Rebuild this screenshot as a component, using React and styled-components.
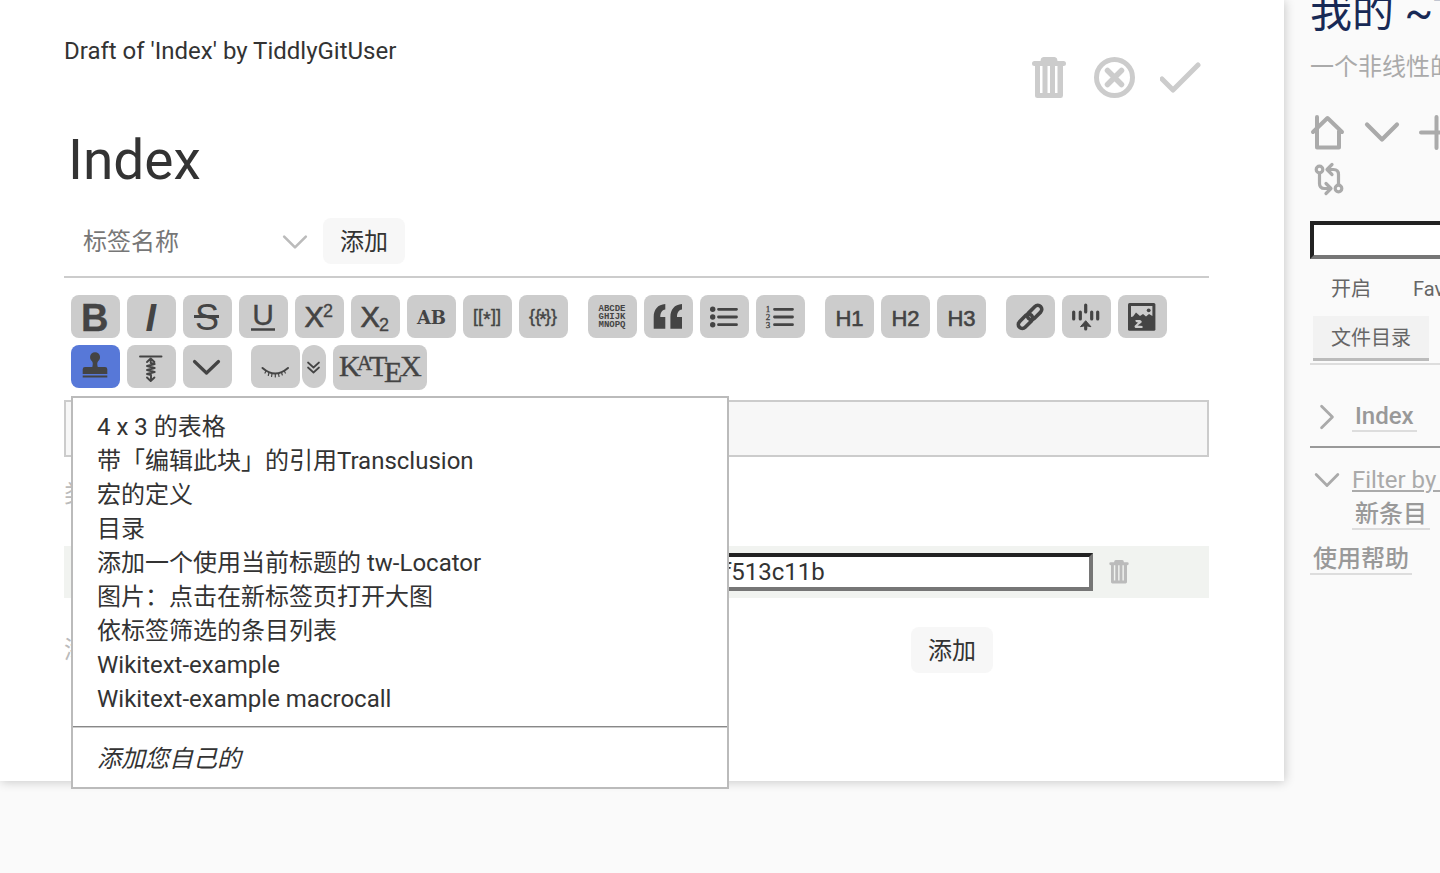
import styled, { createGlobalStyle, css } from "styled-components";

const sans = `Roboto, "Noto Sans CJK SC", sans-serif`;

const snippets = [
  "4 x 3 的表格",
  "带「编辑此块」的引用Transclusion",
  "宏的定义",
  "目录",
  "添加一个使用当前标题的 tw-Locator",
  "图片：点击在新标签页打开大图",
  "依标签筛选的条目列表",
  "Wikitext-example",
  "Wikitext-example macrocall",
];

const TrashIcon = ({ size = 42 }) => (
  <svg width={size} height={size} viewBox="0 0 42 42" aria-hidden="true">
    <g fill="currentColor">
      <path d="M13 1.500q1-1.500 2.500-1.500h11q1.500 0 2.500 1.500l.5 2.500h6a2.300 2.300 0 0 1 0 5H35v29.500a2.500 2.500 0 0 1-2.500 2.500h-23A2.500 2.500 0 0 1 7 38.500V9H6.500a2.300 2.300 0 0 1 0-5h6zM12 9v27h2.500V9zm7.500 0v27H22V9zm7.500 0v27h2.500V9z" fillRule="evenodd" />
    </g>
  </svg>
);

const CancelIcon = () => (
  <svg width="42" height="42" viewBox="0 0 42 42" fill="none" stroke="currentColor" aria-hidden="true">
    <circle cx="20.500" cy="20.500" r="18" strokeWidth="5" />
    <path d="M13.500 13.500l14 14M27.500 13.500l-14 14" strokeWidth="5.500" strokeLinecap="round" />
  </svg>
);

const DoneIcon = () => (
  <svg width="42" height="42" viewBox="0 0 42 42" fill="none" stroke="currentColor" aria-hidden="true">
    <path d="M2 22l11 11L38 8" strokeWidth="5" strokeLinecap="round" strokeLinejoin="round" />
  </svg>
);

const ChevronIcon = ({ size = 24, width = 3, right }) => (
  <svg width={size} height={size} viewBox="0 0 24 24" fill="none" stroke="currentColor" strokeWidth={width} strokeLinecap="round" strokeLinejoin="round" aria-hidden="true">
    <path d={right ? "M7 2l10 10L7 22" : "M2 7l10 10L22 7"} />
  </svg>
);

const HomeIcon = () => (
  <svg width="36" height="36" viewBox="0 0 36 36" fill="none" stroke="currentColor" strokeWidth="4" strokeLinecap="round" strokeLinejoin="round" aria-hidden="true">
    <path d="M7 17v16.500h22V17M3 18L17.500 4 32 18M7 18V3" />
  </svg>
);

const PlusIcon = () => (
  <svg width="36" height="36" viewBox="0 0 36 36" fill="none" stroke="currentColor" strokeWidth="4" strokeLinecap="round" aria-hidden="true">
    <path d="M18.500 3v31M3 18.500h31" />
  </svg>
);

const CompareIcon = () => (
  <svg width="36" height="36" viewBox="0 0 36 36" fill="none" stroke="currentColor" strokeWidth="3.200" strokeLinecap="round" strokeLinejoin="round" aria-hidden="true">
    <circle cx="9.500" cy="8.500" r="3.300" />
    <circle cx="28.500" cy="27.500" r="3.300" />
    <path d="M9.500 12.500v10q0 5 5 5h6M16 22.500l5 5-5 5M28.500 23.500v-10q0-5-5-5h-6M22 3.500l-5 5 5 5" />
  </svg>
);

// every toolbar glyph is drawn on the 49 x 43 face of its button
const glyphs = {
  bold: <text x="10" y="35.500" fontSize="38" fontWeight="bold" strokeWidth=".4">B</text>,
  italic: <text x="18.500" y="35.500" fontSize="38" fontWeight="bold" fontStyle="italic">I</text>,
  strike: (
    <>
      <text x="24" y="35" fontSize="36" textAnchor="middle">S</text>
      <path d="M11 21.500h25" strokeWidth="3" />
    </>
  ),
  underline: (
    <>
      <text x="24" y="29.500" fontSize="30" textAnchor="middle" strokeWidth=".3">U</text>
      <path d="M12 34.500h24" strokeWidth="2.500" />
    </>
  ),
  superscript: (
    <>
      <text x="9.500" y="32" fontSize="29" strokeWidth=".7">X</text>
      <text x="28" y="22" fontSize="18" strokeWidth=".3">2</text>
    </>
  ),
  subscript: (
    <>
      <text x="9.500" y="32" fontSize="29" strokeWidth=".7">X</text>
      <text x="28" y="35.500" fontSize="18" strokeWidth=".3">2</text>
    </>
  ),
  mono: <text x="24.500" y="29" fontSize="18" fontWeight="bold" textAnchor="middle" fontFamily="DejaVu Serif, serif">AB</text>,
  link: (
    <g fontSize="18" textAnchor="middle" strokeWidth=".4">
      <text x="15" y="27">[[</text>
      <text x="24" y="31" fontSize="20">*</text>
      <text x="33" y="27">]]</text>
    </g>
  ),
  transclude: (
    <g fontSize="18" textAnchor="middle" strokeWidth=".4">
      <text x="16" y="27">{"{{"}</text>
      <text x="24" y="31" fontSize="20">*</text>
      <text x="32" y="27">{"}}"}</text>
    </g>
  ),
  block: (
    <g fontFamily="Liberation Mono, monospace" fontSize="9" fontWeight="bold" textAnchor="middle">
      <text x="24" y="16">ABCDE</text>
      <text x="24" y="24">GHIJK</text>
      <text x="24" y="32">MNOPQ</text>
    </g>
  ),
  quote: (
    <path d="M21.300 9v5.500c-3.500.5-5 3.500-5 7.500h5v11.700H9.700V22c0-7.500 4-12.500 11.600-13zM38 9v5.500c-3.500.5-5 3.500-5 7.500h5v11.700H26.400V22c0-7.500 4-12.500 11.600-13z" />
  ),
  bullets: (
    <>
      <circle cx="12.700" cy="14.300" r="2.700" />
      <circle cx="12.700" cy="22" r="2.700" />
      <circle cx="12.700" cy="29.700" r="2.700" />
      <path d="M18.500 14.300h18M18.500 22h18M18.500 29.700h18" strokeWidth="2.800" strokeLinecap="round" />
    </>
  ),
  numbers: (
    <>
      <g fontFamily="Liberation Serif, serif" fontSize="9" textAnchor="middle" strokeWidth=".3">
        <text x="12" y="17">1</text>
        <text x="12" y="25">2</text>
        <text x="12" y="33">3</text>
      </g>
      <path d="M18.500 14.300h18M18.500 22h18M18.500 29.700h18" strokeWidth="2.800" strokeLinecap="round" />
    </>
  ),
  h1: <text x="24.500" y="30.500" fontSize="22" textAnchor="middle" strokeWidth=".6">H1</text>,
  h2: <text x="24.500" y="30.500" fontSize="22" textAnchor="middle" strokeWidth=".6">H2</text>,
  h3: <text x="24.500" y="30.500" fontSize="22" textAnchor="middle" strokeWidth=".6">H3</text>,
  chain: (
    <g fill="none" strokeWidth="3.600">
      <rect x="-8.500" y="-4" width="17" height="8" rx="4" transform="translate(19.500 26.300) rotate(-45)" />
      <rect x="-8.500" y="-4" width="17" height="8" rx="4" transform="translate(28.600 17.500) rotate(-45)" />
    </g>
  ),
  excise: (
    <>
      <path d="M11.700 17v7M18.300 17v7M23.700 10v7M29.700 17v7M35.700 17v7M23.700 29v5" strokeWidth="3.200" strokeLinecap="round" />
      <path d="M23.700 25.700l5.200 6q-5.200-2-10.400 0z" strokeWidth="1" strokeLinejoin="round" />
    </>
  ),
  picture: (
    <>
      <rect x="10" y="8" width="27.400" height="27.700" rx="1.500" />
      <path className="light" d="M13 11h21.400v10l-3.400-2-3 2.500-3-2.500-3 2-4-3.500-3 4-2 .5z" />
      <circle cx="30.700" cy="15.300" r="1.900" />
      <path className="light" d="M17.500 25h4.500q3 1.500 1 3l-3.500 2.500 5 .5v2h-7q-2-1.500 0-3l2.500-2.500q-3-.5-2.500-2.500z" />
    </>
  ),
  stamp: (
    <>
      <path d="M21.300 22c1-4 .4-5-1-6.500a5 5 0 1 1 7.500 0c-1.400 1.500-2 2.500-1 6.500H34q2.300 0 2.300 2.300V29H11.700v-4.700Q11.700 22 14 22z" />
      <path d="M11.700 31.500h24.600" strokeWidth="2" />
    </>
  ),
  height: (
    <g fill="none" strokeWidth="1.900" strokeLinecap="round" strokeLinejoin="round">
      <path d="M13 11.500h21.500" />
      <path d="M20 17l3.700-3.500 3.700 3.500M20 32.500l3.700 3.500 3.700-3.500M23.700 14v4l4 1-7.700 2 7.700 2-7.700 2 7.700 2-7.700 2 4 1v5" />
    </g>
  ),
  more: <path d="M11.500 16.500L23.500 28l12-11.500" fill="none" strokeWidth="3.200" strokeLinecap="round" strokeLinejoin="round" />,
  eye: (
    <g fill="none" strokeLinecap="round">
      <path d="M11.500 23q12.700 11 25.500 0" strokeWidth="2" />
      <path d="M15 26l-1 2M18 27.500l-.7 3M21 28.500l-.4 3M24.300 28.500v3.500M27.500 28.500l.5 3M30.500 27.500l.8 2.500M33.300 26l1 2" strokeWidth="1.200" />
    </g>
  ),
};

const groups = [
  ["bold", "italic", "strike", "underline", "superscript", "subscript", "mono", "link", "transclude"],
  ["block", "quote", "bullets", "numbers"],
  ["h1", "h2", "h3"],
  ["chain", "excise", "picture"],
];

const Glyph = ({ name }) => (
  <GlyphSvg width="49" height="43" viewBox="0 0 49 43" aria-hidden="true">
    {glyphs[name]}
  </GlyphSvg>
);

const EditorToolbar = () => (
  <Toolbar>
    {groups.map((group, g) =>
      group.map((name, i) => (
        <ToolButton key={name} type="button" aria-label={name} $start={g > 0 && i === 0}>
          <Glyph name={name} />
        </ToolButton>
      ))
    )}
    <StampWrap>
      <ToolButton type="button" aria-label="stamp" aria-expanded="true" $active>
        <Glyph name="stamp" />
      </ToolButton>
      <StampMenu>
        <SnippetList>
          {snippets.map((text) => (
            <li key={text}>
              <SnippetLink href="#">{text}</SnippetLink>
            </li>
          ))}
        </SnippetList>
        <MenuDivider />
        <SnippetLink href="#" $own>
          添加您自己的
        </SnippetLink>
      </StampMenu>
    </StampWrap>
    <ToolButton type="button" aria-label="height">
      <Glyph name="height" />
    </ToolButton>
    <ToolButton type="button" aria-label="more">
      <Glyph name="more" />
    </ToolButton>
    <PreviewGroup>
      <ToolButton type="button" aria-label="preview">
        <Glyph name="eye" />
      </ToolButton>
      <PreviewType type="button" aria-label="preview type">
        <GlyphSvg width="24" height="43" viewBox="0 0 24 43" aria-hidden="true">
          <path d="M6 17.500l5.500 5 5.500-5M6 22.500l5.500 5 5.500-5" fill="none" strokeWidth="1.700" strokeLinecap="round" strokeLinejoin="round" />
        </GlyphSvg>
      </PreviewType>
    </PreviewGroup>
    <KatexButton type="button" aria-label="KaTeX">
      <GlyphSvg width="94" height="45" viewBox="0 0 94 45" aria-hidden="true">
        <g fontFamily="Liberation Serif, serif" fontSize="30" strokeWidth=".4">
          <text x="6" y="31">K</text>
          <text x="24" y="25" fontSize="21">A</text>
          <text x="36" y="31">T</text>
          <text x="51" y="37">E</text>
          <text x="67" y="31">X</text>
        </g>
      </GlyphSvg>
    </KatexButton>
  </Toolbar>
);

const Sidebar = () => (
  <SidebarWrap>
    <SiteTitle>我的 ~TiddlyWiki</SiteTitle>
    <SiteSubtitle>一个非线性的个人网络笔记本</SiteSubtitle>
    <PageControls>
      <IconButton type="button" aria-label="home">
        <HomeIcon />
      </IconButton>
      <IconButton type="button" aria-label="more">
        <ChevronIcon size={36} width={2.8} />
      </IconButton>
      <IconButton type="button" aria-label="new">
        <PlusIcon />
      </IconButton>
    </PageControls>
    <SyncButton type="button" aria-label="sync">
      <CompareIcon />
    </SyncButton>
    <SearchInput type="search" aria-label="search" />
    <TabRow>
      <Tab type="button">开启</Tab>
      <Tab type="button">Favorites</Tab>
    </TabRow>
    <TabRow>
      <Tab type="button" $selected>
        文件目录
      </Tab>
    </TabRow>
    <TabDivider />
    <TreeRow>
      <ChevronIcon size={26} width={2.6} right />
      <TreeLink href="#">Index</TreeLink>
    </TreeRow>
    <TreeDivider />
    <TreeRow>
      <ChevronIcon size={26} width={2.6} />
      <FilterLink href="#">Filter by tags</FilterLink>
    </TreeRow>
    <TreeChild>
      <TreeLink href="#">新条目</TreeLink>
    </TreeChild>
    <HelpRow>
      <TreeLink href="#">使用帮助</TreeLink>
    </HelpRow>
  </SidebarWrap>
);

const App = () => {
  return (
    <>
      <GlobalStyle />
      <Page>
        <Tiddler>
          <Header>
            <DraftTitle>Draft of 'Index' by TiddlyGitUser</DraftTitle>
            <Actions>
              <IconButton type="button" aria-label="delete">
                <TrashIcon />
              </IconButton>
              <IconButton type="button" aria-label="cancel">
                <CancelIcon />
              </IconButton>
              <IconButton type="button" aria-label="done">
                <DoneIcon />
              </IconButton>
            </Actions>
          </Header>
          <TitleInput aria-label="title" defaultValue="Index" />
          <TagRow>
            <TagInput aria-label="标签名称" placeholder="标签名称" />
            <TagArrow type="button" aria-label="tags">
              <ChevronIcon size={26} width={2.4} />
            </TagArrow>
            <AddButton type="button">添加</AddButton>
          </TagRow>
          <EditorToolbar />
          <BodyInput aria-label="text" />
          <TypeLabel>类型：</TypeLabel>
          <FieldRow>
            <FieldInput aria-label="field" defaultValue="f513c11b" />
            <IconButton type="button" aria-label="delete field">
              <TrashIcon size={24} />
            </IconButton>
          </FieldRow>
          <NewFieldRow>
            <span>添加</span>
            <AddButton type="button">添加</AddButton>
          </NewFieldRow>
        </Tiddler>
        <Sidebar />
      </Page>
    </>
  );
};
export default App;

const GlobalStyle = createGlobalStyle`
  * {
    box-sizing: border-box;
  }
  body {
    margin: 0;
    background: #fafafa;
    color: #333;
    font-family: ${sans};
    font-size: 24px;
    line-height: 34px;
  }
  button, input, textarea {
    font: inherit;
    color: inherit;
  }
`;
const Page = styled.div`
  display: grid;
  grid-template-columns: minmax(0, 1fr) 156px;
  align-items: start;
  min-height: 100vh;
`;
const Tiddler = styled.main`
  position: relative;
  z-index: 1;
  padding: 34px 75px 108px 64px;
  background: #fff;
  box-shadow: 1px 1px 10px rgba(0, 0, 0, 0.2);
`;
const Header = styled.header`
  display: flex;
  justify-content: space-between;
  align-items: flex-start;
`;
const DraftTitle = styled.div``;
const Actions = styled.div`
  display: flex;
  gap: 24px;
  padding: 23px 7px 0 0;
  color: #ccc;
`;
const IconButton = styled.button`
  display: flex;
  align-items: center;
  justify-content: center;
  padding: 0;
  border: none;
  background: transparent;
  cursor: pointer;
`;
const TitleInput = styled.input`
  display: block;
  width: 100%;
  height: 64px;
  margin-top: 29px;
  padding: 0 4px;
  border: none;
  outline: none;
  background: transparent;
  font-size: 55px;
  line-height: 64px;
`;
const TagRow = styled.div`
  display: flex;
  align-items: center;
  margin-top: 26px;
  padding-bottom: 12px;
  border-bottom: 2px solid #ccc;
`;
const TagInput = styled.input`
  width: 218px;
  padding: 2px 19px 0;
  border: none;
  outline: none;
  background: transparent;
  &::placeholder {
    color: #777;
    opacity: 1;
  }
`;
const TagArrow = styled(IconButton)`
  margin-right: 15px;
  padding-top: 2px;
  color: #bbb;
`;
const AddButton = styled.button`
  height: 46px;
  padding: 2px 17px 0;
  border: none;
  border-radius: 8px;
  background: #f7f7f7;
  cursor: pointer;
`;
const Toolbar = styled.div`
  display: flex;
  flex-wrap: wrap;
  align-items: flex-start;
  gap: 7px;
  margin-top: 17px;
  padding-left: 7px;
`;
const toolFace = css`
  display: block;
  padding: 0;
  border: none;
  background: #ccc;
  cursor: pointer;
`;
const ToolButton = styled.button`
  ${toolFace}
  width: 49px;
  height: 43px;
  margin-left: ${({ $start }) => ($start ? "13px" : "0")};
  border-radius: 8px;
  background: ${({ $active }) => ($active ? "#5778d8" : "#ccc")};
`;
const GlyphSvg = styled.svg`
  display: block;
  fill: #444;
  stroke: #444;
  stroke-width: 0;
  font-family: "Liberation Sans", sans-serif;
  .light {
    fill: #ccc;
  }
`;
const PreviewGroup = styled.div`
  display: flex;
  gap: 2px;
  margin-left: 12px;
`;
const PreviewType = styled.button`
  ${toolFace}
  width: 24px;
  height: 43px;
  border-radius: 12px;
`;
const KatexButton = styled.button`
  ${toolFace}
  width: 94px;
  height: 45px;
  border-radius: 8px;
`;
const StampWrap = styled.div`
  position: relative;
`;
const StampMenu = styled.div`
  position: absolute;
  top: 51px;
  left: 0;
  width: 658px;
  padding: 12px 0 11px;
  border: 2px solid #bbb;
  background: #fff;
`;
const SnippetList = styled.ul`
  margin: 0;
  padding: 0;
  list-style: none;
`;
const SnippetLink = styled.a`
  display: block;
  padding: 0 24px;
  color: #333;
  font-style: ${({ $own }) => ($own ? "italic" : "normal")};
  text-decoration: none;
`;
const MenuDivider = styled.hr`
  margin: 10px 0 14px;
  border: none;
  border-top: 1px solid #888;
  border-bottom: 1px solid #ccc;
`;
const BodyInput = styled.textarea`
  display: block;
  width: 100%;
  height: 57px;
  margin-top: 10px;
  border: 2px solid #ccc;
  background: #f7f7f7;
  resize: none;
`;
const TypeLabel = styled.div`
  margin-top: 20px;
  color: #bbb;
`;
const FieldRow = styled.div`
  display: flex;
  align-items: center;
  gap: 14px;
  height: 52px;
  margin-top: 35px;
  padding: 0 78px 0 650px;
  background: #f1f3f0;
  color: #bbb;
`;
const sunken = css`
  height: 38px;
  border: 4px solid;
  border-color: #222 #767676 #767676 #222;
  border-radius: 0;
  outline: none;
  background: #fff;
  color: #333;
`;
const FieldInput = styled.input`
  ${sunken}
  flex: 1;
  min-width: 0;
  padding: 0 5px;
`;
const NewFieldRow = styled.div`
  display: flex;
  align-items: center;
  justify-content: space-between;
  margin-top: 29px;
  padding-right: 216px;
  > span {
    color: #bbb;
  }
`;
const SidebarWrap = styled.aside`
  overflow: hidden;
  padding: 0 0 24px 26px;
  color: #aaa;
  white-space: nowrap;
`;
const SiteTitle = styled.h1`
  margin: 0;
  color: #182955;
  font-size: 42px;
  font-weight: 400;
  line-height: 26px;
`;
const SiteSubtitle = styled.div`
  margin-top: 24px;
`;
const PageControls = styled.div`
  display: flex;
  gap: 18px;
  margin-top: 30px;
  ${IconButton} {
    flex: 0 0 36px;
    height: 36px;
    color: #aaa;
  }
`;
const SyncButton = styled(IconButton)`
  margin-top: 11px;
  color: #aaa;
`;
const SearchInput = styled.input`
  ${sunken}
  display: block;
  width: 240px;
  margin-top: 24px;
  appearance: none;
`;
const TabRow = styled.div`
  display: flex;
  gap: 6px;
  padding-left: 3px;
  margin-top: 13px;
  & + & {
    margin-top: 10px;
  }
`;
const Tab = styled.button`
  padding: 0 18px;
  border: none;
  background: transparent;
  color: #666;
  font-size: 20px;
  cursor: pointer;
  ${({ $selected }) =>
    $selected &&
    css`
      padding-top: 5px;
      padding-bottom: 3px;
      border-bottom: 3px solid #bbb;
      background: #f2f2f2;
    `}
`;
const TabDivider = styled.hr`
  height: 2px;
  margin: 2px 0 37px;
  border: none;
  background: #ddd;
`;
const TreeRow = styled.div`
  display: flex;
  align-items: center;
  gap: 12px;
  height: 30px;
  padding-left: 4px;
  svg {
    flex: none;
  }
`;
const TreeLink = styled.a`
  padding: 0 3px;
  border-bottom: 2px solid #ddd;
  color: #999;
  font-weight: 500;
  line-height: 28px;
  text-decoration: none;
`;
const FilterLink = styled.a`
  color: #aaa;
`;
const TreeDivider = styled.hr`
  height: 2px;
  margin: 14px 0 17px;
  border: none;
  background: #999;
`;
const TreeChild = styled.div`
  display: flex;
  margin: 5px 0 0 42px;
`;
const HelpRow = styled.div`
  display: flex;
  margin-top: 15px;
`;
